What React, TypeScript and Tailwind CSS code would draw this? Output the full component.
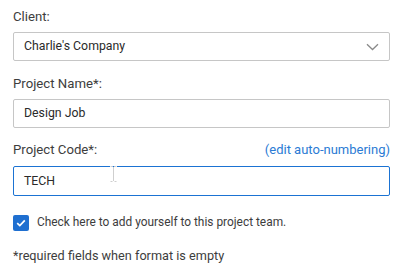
import React from "react";

function Chevron() {
  return (
    <svg width="13" height="8" viewBox="0 0 13 8" fill="none">
      <path d="M1 1.2 L6.5 6.5 L12 1.2" stroke="#8a8a8a" strokeWidth="1.3" />
    </svg>
  );
}

function IBeam() {
  // mouse pointer sitting over the code field
  return (
    <svg
      className="absolute left-[95px] top-[-2px]"
      width="9"
      height="18"
      viewBox="0 0 9 18"
      fill="none"
    >
      <path d="M1 1.5 H3.5 M5.5 1.5 H8 M4.5 2 V16 M1 16.5 H3.5 M5.5 16.5 H8" stroke="#ffffff" strokeWidth="2.6" />
      <path d="M1.5 1.5 H3.5 M5.5 1.5 H7.5 M4.5 2 V16 M1.5 16.5 H3.5 M5.5 16.5 H7.5" stroke="#cfcfcf" strokeWidth="1" />
    </svg>
  );
}

export default function App() {
  return (
    <div className="w-[402px] h-[275px] bg-white pl-[13px] pr-[12px] pt-[7px] font-['Roboto','Liberation_Sans',sans-serif] text-[#3d3d3d]">
      <label className="block text-[13.2px] leading-5">Client:</label>
      <div className="mt-[5px] h-[29px] border border-[#c6c6c6] rounded-[2px] pl-[10px] pr-[10px] flex items-center justify-between">
        <span className="text-[12.3px] text-[#2a2a2a]">Charlie's Company</span>
        <Chevron />
      </div>

      <label className="block mt-[13px] text-[13.2px] leading-5">Project Name*:</label>
      <div className="mt-[5px] h-[29px] border border-[#c6c6c6] rounded-[2px] pl-[10px] flex items-center">
        <span className="text-[12.3px] text-[#2a2a2a]">Design Job</span>
      </div>

      <div className="mt-[12px] flex items-center justify-between leading-5">
        <label className="text-[13.2px]">Project Code*:</label>
        <span className="text-[13px] text-[#2b7bd4]">(edit auto-numbering)</span>
      </div>
      <div className="relative mt-[6px] h-[30px] border border-[#1b73d3] rounded-[2px] pl-[10px] flex items-center">
        <span className="text-[12.3px] text-[#2a2a2a]">TECH</span>
        <IBeam />
      </div>

      <div className="mt-[18px] flex items-center gap-[8px]">
        <span className="w-[16px] h-[16px] rounded-[2px] bg-[#1f6fd0] flex items-center justify-center">
          <svg width="10" height="8" viewBox="0 0 10 8" fill="none">
            <path d="M1.2 4.2 L3.8 6.6 L8.8 1.4" stroke="#ffffff" strokeWidth="1.7" />
          </svg>
        </span>
        <span className="text-[11.9px] text-[#3d3d3d]">Check here to add yourself to this project team.</span>
      </div>

      <p className="mt-[14px] text-[12.7px] leading-5 text-[#3d3d3d]">*required fields when format is empty</p>
    </div>
  );
}
